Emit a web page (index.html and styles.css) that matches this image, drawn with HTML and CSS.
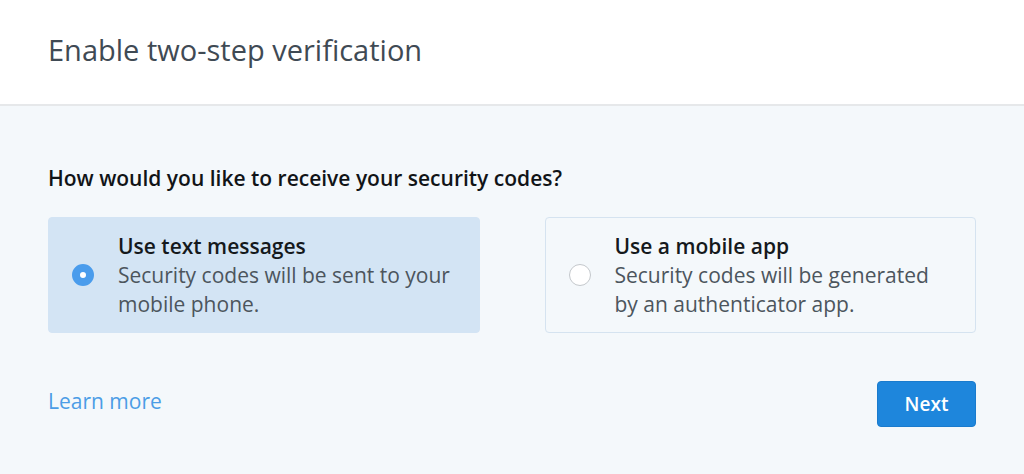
FILE: index.html
```html
<!DOCTYPE html>
<html lang="en">
<head>
<meta charset="utf-8">
<title>Enable two-step verification</title>
<link rel="stylesheet" href="styles.css">
</head>
<body>
<div class="dialog">
  <header class="header">
    <h1 class="title">Enable two-step verification</h1>
  </header>
  <main class="content">
    <p class="question">How would you like to receive your security codes?</p>
    <div class="options">
      <label class="option option-selected">
        <span class="radio radio-checked"></span>
        <span class="option-text">
          <span class="option-title">Use text messages</span>
          <span class="option-desc">Security codes will be sent to your mobile phone.</span>
        </span>
      </label>
      <label class="option">
        <span class="radio"></span>
        <span class="option-text">
          <span class="option-title">Use a mobile app</span>
          <span class="option-desc">Security codes will be generated by an authenticator app.</span>
        </span>
      </label>
    </div>
    <div class="footer">
      <a class="learn-more" href="#">Learn more</a>
      <button class="next-btn" type="button">Next</button>
    </div>
  </main>
</div>
</body>
</html>
```

FILE: styles.css
```css
html, body {
  margin: 0;
  padding: 0;
  height: 100%;
}
body {
  font-family: "Open Sans", "Noto Sans", sans-serif;
  background: #f4f8fb;
}
.dialog {
  display: flex;
  flex-direction: column;
  min-height: 100%;
}
.header {
  background: #ffffff;
  height: 106px;
  box-sizing: border-box;
  padding: 0 48px 4px;
  display: flex;
  align-items: center;
  border-bottom: 2px solid #e6e8ea;
}
.title {
  margin: 0;
  font-size: 29px;
  line-height: 40px;
  font-weight: 400;
  color: #3f4a54;
}
.content {
  flex: 1;
  padding: 58px 48px 0;
  background: #f4f8fb;
}
.question {
  margin: 0 0 25px;
  font-size: 21px;
  line-height: 28px;
  font-weight: 600;
  color: #111417;
}
.options {
  display: grid;
  grid-template-columns: 1fr 1fr;
  gap: 65px;
}
.option {
  display: flex;
  align-items: center;
  height: 116px;
  box-sizing: border-box;
  padding: 0 20px 0 23px;
  border: 1px solid #d5e3f0;
  border-radius: 4px;
  background: #f4f8fb;
  cursor: pointer;
}
.option-selected {
  background: #d3e4f4;
  border-color: #d3e4f4;
}
.radio {
  flex: none;
  width: 22px;
  height: 22px;
  box-sizing: border-box;
  border-radius: 50%;
  border: 1px solid #c4c8cc;
  background: #ffffff;
  margin-right: 24px;
}
.radio-checked {
  border: 8px solid #4a9cec;
  background: #ffffff;
}
.option-text {
  display: flex;
  flex-direction: column;
  max-width: 340px;
}
.option-title {
  font-size: 21px;
  line-height: 29px;
  font-weight: 600;
  color: #15191c;
}
.option-desc {
  font-size: 21px;
  line-height: 29px;
  color: #4c555d;
}
.footer {
  display: flex;
  justify-content: space-between;
  align-items: center;
  margin-top: 48px;
}
.learn-more {
  font-size: 21px;
  line-height: 28px;
  padding-bottom: 6px;
  color: #4b9de6;
  text-decoration: none;
}
.next-btn {
  font-family: inherit;
  font-size: 19px;
  font-weight: 600;
  color: #ffffff;
  background: #1e86dc;
  border: 1px solid #1a7bcd;
  border-radius: 4px;
  width: 99px;
  height: 46px;
  padding: 0;
  cursor: pointer;
}
```
